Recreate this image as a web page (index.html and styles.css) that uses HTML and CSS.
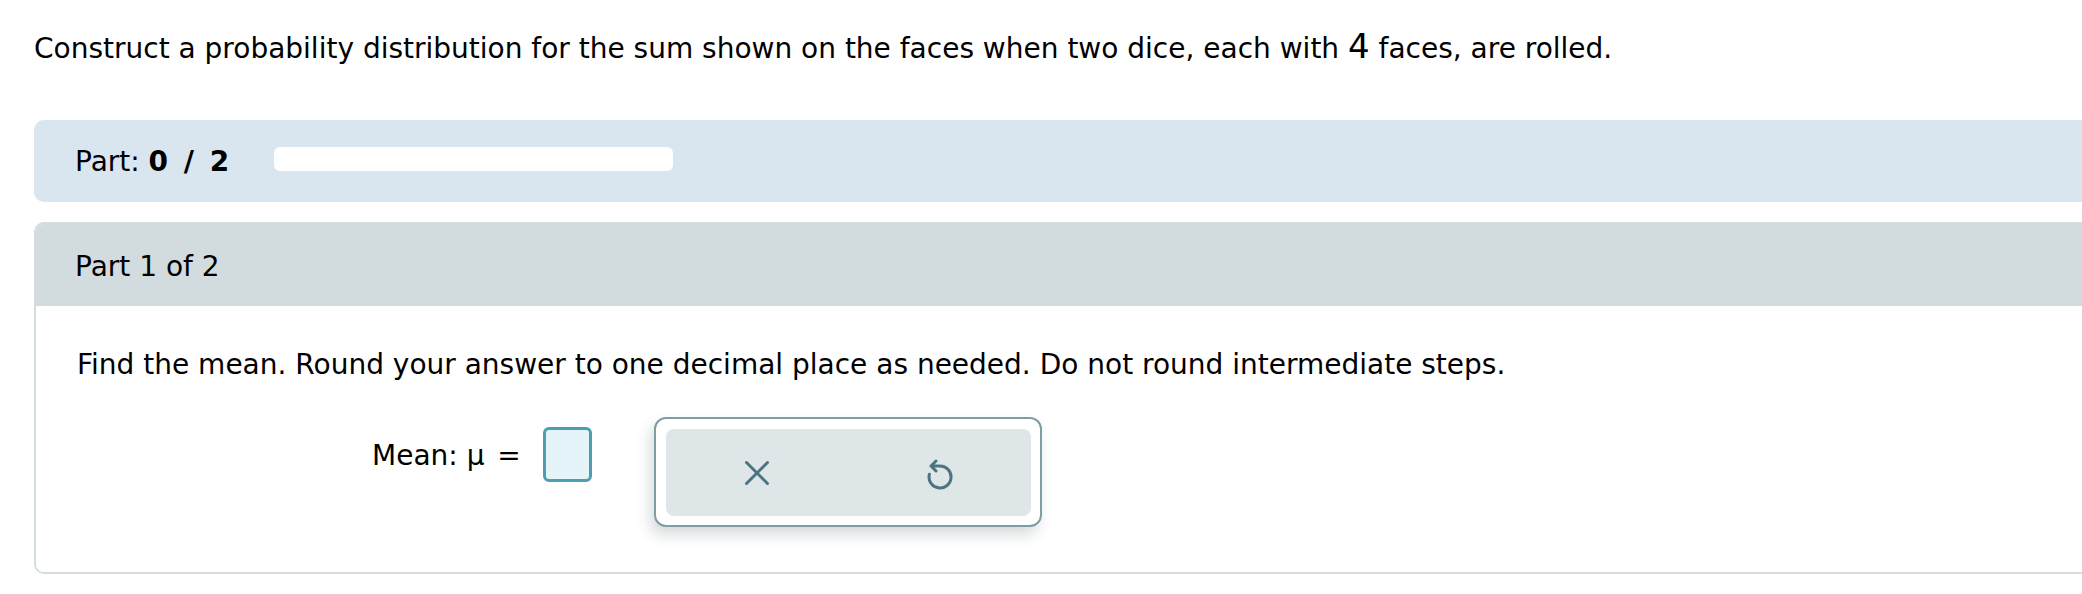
FILE: index.html
```html
<!DOCTYPE html>
<html lang="en">
<head>
<meta charset="utf-8">
<title>Probability distribution</title>
<link rel="stylesheet" href="styles.css">
</head>
<body>
<p class="question">Construct a probability distribution for the sum shown on the faces when two dice, each with <span class="mj-num">4</span> faces, are rolled.</p>

<div class="progress-box">
  <span class="part-label">Part: <b>0 / 2</b></span>
  <div class="progress-track"></div>
</div>

<section class="part-card">
  <header class="part-head">Part 1 of 2</header>
  <div class="part-body">
    <p class="prompt">Find the mean. Round your answer to one decimal place as needed. Do not round intermediate steps.</p>
    <div class="answer-row">
      <span class="mean-label">Mean: <span class="mu">μ</span> <span class="eq">=</span></span>
      <span class="input-box"></span>
      <div class="toolbar">
        <div class="toolbar-inner">
          <button class="tool-btn" type="button" aria-label="Clear">
            <svg width="26" height="26" viewBox="0 0 26 26"><path d="M2.5 2.5 L23.5 23.5 M23.5 2.5 L2.5 23.5" fill="none" stroke="#4a7480" stroke-width="3" stroke-linecap="round"/></svg>
          </button>
          <button class="tool-btn" type="button" aria-label="Undo">
            <svg width="28" height="34" viewBox="0 0 28 34"><path d="M14 10 A11 11 0 1 1 3.4 18.2 M14 10 H5 M10 5 L5 10 L10 15" fill="none" stroke="#4a7480" stroke-width="3" stroke-linecap="round" stroke-linejoin="round"/></svg>
          </button>
        </div>
      </div>
    </div>
  </div>
</section>
</body>
</html>
```

FILE: styles.css
```css
html, body {
  margin: 0;
  background: #ffffff;
}
body {
  padding-left: 34px;
  overflow: hidden;
  font-family: "DejaVu Sans", Verdana, sans-serif;
  font-size: 28px;
  color: #000000;
}
.question {
  margin: 31px 0 0 0;
  line-height: 36px;
  white-space: nowrap;
}
.mj-num {
  font-family: "DejaVu Sans", sans-serif;
  font-size: 34px;
  font-weight: normal;
  line-height: 20px;
}
.progress-box {
  margin-top: 53px;
  width: 2100px;
  height: 82px;
  box-sizing: border-box;
  padding-left: 41px;
  background: #dae6ef;
  border-radius: 10px;
  display: flex;
  align-items: center;
  gap: 42px;
}
.part-label {
  white-space: nowrap;
}
.part-label b {
  font-weight: bold;
  letter-spacing: 2.5px;
  word-spacing: 1px;
}
.progress-track {
  width: 399px;
  height: 24px;
  margin-top: -4px;
  background: #ffffff;
  border-radius: 6px;
}
.part-card {
  margin-top: 20px;
  width: 2100px;
  border: 2px solid #d3dcdf;
  border-radius: 10px;
  overflow: hidden;
}
.part-head {
  height: 82px;
  box-sizing: border-box;
  padding-left: 39px;
  padding-top: 3px;
  background: #d2dbde;
  display: flex;
  align-items: center;
}
.part-body {
  padding: 41px 0 45px 41px;
  background: #ffffff;
}
.prompt {
  margin: 0;
  line-height: 36px;
  white-space: nowrap;
}
.answer-row {
  margin-top: 34px;
  padding-left: 295px;
  display: flex;
  align-items: flex-start;
}
.mean-label {
  margin-top: 21px;
  line-height: 36px;
  white-space: nowrap;
}
.eq {
  margin-left: 4px;
}
.input-box {
  margin-top: 10px;
  margin-left: 22px;
  width: 49px;
  height: 55px;
  box-sizing: border-box;
  border: 3px solid #4b9fb0;
  border-radius: 6px;
  background: #e5f4f8;
}
.toolbar {
  margin-left: 62px;
  width: 388px;
  height: 110px;
  box-sizing: border-box;
  border: 2px solid #7f9da5;
  border-radius: 12px;
  background: #ffffff;
  padding: 10px 9px 9px 10px;
  box-shadow: -4px 8px 14px rgba(40, 60, 70, 0.18);
}
.toolbar-inner {
  height: 100%;
  background: #dfe6e8;
  border-radius: 8px;
  display: flex;
}
.tool-btn {
  flex: 1;
  border: 0;
  padding: 0;
  background: transparent;
  display: flex;
  align-items: center;
  justify-content: center;
}
```
